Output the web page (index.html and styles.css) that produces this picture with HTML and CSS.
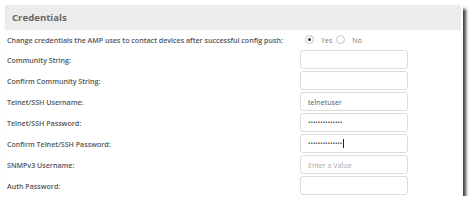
FILE: index.html
```html
<!DOCTYPE html>
<html>
<head>
<meta charset="utf-8">
<link rel="stylesheet" href="styles.css">
</head>
<body>
<div class="panel">
  <div class="header">Credentials</div>
  <div class="row first">
    <div class="label">Change credentials the AMP uses to contact devices after successful config push:</div>
    <div class="radios">
      <span class="radio on"></span><span class="opt">Yes</span>
      <span class="radio"></span><span class="opt">No</span>
    </div>
  </div>
  <div class="row">
    <div class="label">Community String:</div>
    <div class="input"></div>
  </div>
  <div class="row">
    <div class="label">Confirm Community String:</div>
    <div class="input"></div>
  </div>
  <div class="row">
    <div class="label">Telnet/SSH Username:</div>
    <div class="input">telnetuser</div>
  </div>
  <div class="row">
    <div class="label">Telnet/SSH Password:</div>
    <div class="input dots">••••••••••••••</div>
  </div>
  <div class="row">
    <div class="label">Confirm Telnet/SSH Password:</div>
    <div class="input dots">••••••••••••••<span class="caret"></span></div>
  </div>
  <div class="row">
    <div class="label">SNMPv3 Username:</div>
    <div class="input placeholder">Enter a Value</div>
  </div>
  <div class="row">
    <div class="label">Auth Password:</div>
    <div class="input"></div>
  </div>
</div>
</body>
</html>
```
FILE: styles.css
```css
html, body {
  margin: 0;
  padding: 0;
  background: #fff;
}
body {
  padding: 5px 0 0 5px;
  font-family: "Open Sans", "Liberation Sans", sans-serif;
}
.panel {
  width: 458px;
  height: 191px;
  background: #fff;
  overflow: hidden;
  box-shadow: 3px 4px 3px rgba(0, 0, 0, 0.75);
}
.header {
  width: 456px;
  height: 25px;
  background: #ececec;
  box-sizing: border-box;
  padding-left: 7px;
  display: flex;
  align-items: center;
  font-size: 9.6px;
  font-weight: 700;
  color: #666;
}
.row {
  display: flex;
  align-items: center;
  height: 21px;
  padding-left: 2px;
}
.row.first {
  height: 19px;
}
.label {
  width: 293px;
  font-size: 7.1px;
  font-weight: 600;
  color: #555;
  white-space: nowrap;
}
.radios {
  display: flex;
  align-items: center;
  padding-left: 5px;
  font-size: 7.1px;
  color: #777;
}
.radio {
  width: 9px;
  height: 9px;
  border: 1px solid #c4c4c4;
  border-radius: 50%;
  box-sizing: border-box;
  display: flex;
  align-items: center;
  justify-content: center;
  margin-right: 7px;
}
.radio.on::after {
  content: "";
  width: 3px;
  height: 3px;
  border-radius: 50%;
  background: #333;
}
.opt {
  margin-right: 4px;
}
.input {
  width: 108px;
  height: 19px;
  box-sizing: border-box;
  border: 1px solid #dcdcdc;
  border-radius: 3px;
  display: flex;
  align-items: center;
  padding-left: 7px;
  font-size: 7.1px;
  color: #555;
}
.input.dots {
  font-size: 6.5px;
  letter-spacing: 0;
  color: #555;
}
.input.placeholder {
  color: #aaa;
}
.caret {
  display: inline-block;
  width: 1px;
  height: 9px;
  background: #222;
  margin-left: 1px;
}
```
